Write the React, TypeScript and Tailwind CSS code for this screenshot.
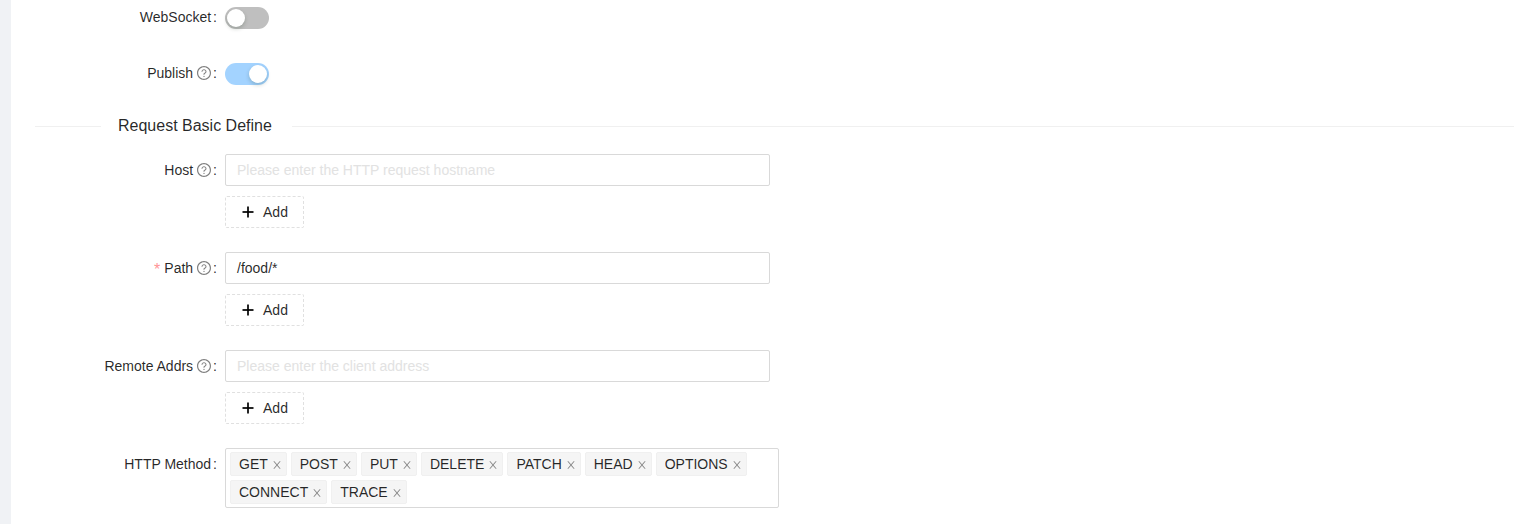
import React from "react";

const Help = () => (
  <svg viewBox="64 64 896 896" width="14" height="14" fill="rgba(0,0,0,0.5)" className="ml-1 shrink-0">
    <path d="M512 64C264.6 64 64 264.6 64 512s200.6 448 448 448 448-200.6 448-448S759.4 64 512 64zm0 820c-205.4 0-372-166.6-372-372s166.6-372 372-372 372 166.6 372 372-166.6 372-372 372z" />
    <path d="M623.6 316.7C593.6 290.4 554 276 512 276s-81.6 14.500-111.600 40.700C369.200 344 352 380.700 352 420v7.600c0 4.400 3.600 8 8 8h48c4.400 0 8-3.600 8-8V420c0-44.100 43.100-80 96-80s96 35.900 96 80c0 31.100-22 59.600-56.100 72.700-21.200 8.100-39.200 22.300-52.100 40.900-13.100 19-19.900 41.800-19.900 64.900V620c0 4.400 3.600 8 8 8h48c4.400 0 8-3.600 8-8v-22.700a48.300 48.300 0 0 1 30.900-44.800c59-22.700 97.100-74.700 97.100-132.500.1-39.300-17.100-76-48.300-103.300zM472 732a40 40 0 1 0 80 0 40 40 0 1 0-80 0z" />
  </svg>
);

const Label = ({ text, help, required, raised }: { text: string; help?: boolean; required?: boolean; raised?: boolean }) => (
  <div className={`w-[214px] shrink-0 flex items-center justify-end text-[14px] text-[rgba(0,0,0,0.85)] ${raised ? "h-[30px]" : "h-8"}`}>
    {required && <span className="text-[#ff4d4f] mr-1 text-[16px] leading-none mt-[3px] opacity-60">*</span>}
    <span>{text}</span>
    {help && <Help />}
    <span className="ml-[2px] mr-[8px]">:</span>
  </div>
);

const Switch = ({ on }: { on?: boolean }) => (
  <div className="h-8 flex items-center">
    <div className={`relative w-11 h-[22px] rounded-full ${on ? "bg-[#a3d3ff]" : "bg-[#bfbfbf]"}`}>
      <div
        className={`absolute top-[2px] w-[18px] h-[18px] rounded-full bg-white shadow-[0_2px_4px_0_rgba(0,35,11,0.2)] ${on ? "left-[24px]" : "left-[2px]"}`}
      />
    </div>
  </div>
);

const Field = ({ value, placeholder }: { value?: string; placeholder?: string }) => (
  <div className="w-[545px] h-8 border border-[#d9d9d9] rounded-[2px] px-[11px] flex items-center text-[14px] bg-white">
    {value ? (
      <span className="text-[rgba(0,0,0,0.85)]">{value}</span>
    ) : (
      <span className="text-[#e2e2e2]">{placeholder}</span>
    )}
  </div>
);

const AddButton = () => (
  <div className="mt-[10px] w-[79px] h-8 border border-dashed border-[#e0e0e0] rounded-[2px] flex items-center justify-center gap-2 text-[14px] text-[rgba(0,0,0,0.85)] bg-white">
    <svg viewBox="0 0 14 14" width="14" height="14" fill="rgba(0,0,0,0.85)">
      <rect x="6" y="1.500" width="2" height="11" />
      <rect x="1.500" y="6" width="11" height="2" />
    </svg>
    <span>Add</span>
  </div>
);

const Tag = ({ text }: { text: string }) => (
  <div className="h-6 mr-1 my-[2px] pl-2 pr-1 bg-[#f5f5f5] border border-[#f0f0f0] rounded-[2px] flex items-center text-[14px] text-[rgba(0,0,0,0.85)]">
    <span>{text}</span>
    <svg viewBox="64 64 896 896" width="10" height="10" fill="rgba(0,0,0,0.45)" className="ml-1 mt-[2px]">
      <path d="M563.800 512l262.500-312.900c4.400-5.200.7-13.100-6.100-13.100h-79.800c-4.700 0-9.200 2.100-12.300 5.700L511.600 449.800 295.100 191.700c-3-3.600-7.500-5.700-12.300-5.700H203c-6.800 0-10.500 7.900-6.100 13.100L459.400 512 196.900 824.900A7.950 7.950 0 0 0 203 838h79.800c4.700 0 9.200-2.100 12.300-5.700l216.500-258.100 216.500 258.100c3 3.600 7.500 5.700 12.300 5.700h79.800c6.800 0 10.500-7.900 6.100-13.100L563.800 512z" />
    </svg>
  </div>
);

const Row = ({ children, className }: { children: React.ReactNode; className?: string }) => (
  <div className={`flex items-start ${className ?? ""}`}>{children}</div>
);

const methods = ["GET", "POST", "PUT", "DELETE", "PATCH", "HEAD", "OPTIONS", "CONNECT", "TRACE"];

export default function App() {
  return (
    <div className="w-[1514px] h-[524px] overflow-hidden flex bg-white font-['Liberation_Sans',Arial,sans-serif] [font-feature-settings:'tnum']">
      <div className="w-[11px] shrink-0 bg-[#f0f2f5]" />
      <div className="flex-1 min-w-0 pt-[2px]">
        <Row>
          <Label text="WebSocket" raised />
          <Switch />
        </Row>
        <Row className="mt-6">
          <Label text="Publish" help raised />
          <Switch on />
        </Row>
        <div className="mt-[24px] ml-[24px] h-6 flex items-center text-[16px] text-[rgba(0,0,0,0.85)]">
          <div className="w-[66px] h-px bg-[#f0f0f0]" />
          <span className="pl-[17px] pr-[20px]">Request Basic Define</span>
          <div className="flex-1 h-px bg-[#f0f0f0]" />
        </div>
        <Row className="mt-[16px]">
          <Label text="Host" help />
          <div>
            <Field placeholder="Please enter the HTTP request hostname" />
            <AddButton />
          </div>
        </Row>
        <Row className="mt-6">
          <Label text="Path" help required />
          <div>
            <Field value="/food/*" />
            <AddButton />
          </div>
        </Row>
        <Row className="mt-6">
          <Label text="Remote Addrs" help />
          <div>
            <Field placeholder="Please enter the client address" />
            <AddButton />
          </div>
        </Row>
        <Row className="mt-6">
          <Label text="HTTP Method" />
          <div className="w-[554px] h-[60px] border border-[#d9d9d9] rounded-[2px] pl-1 pr-1 pt-px flex flex-wrap content-start bg-white">
            {methods.map((m) => (
              <Tag key={m} text={m} />
            ))}
          </div>
        </Row>
      </div>
    </div>
  );
}
